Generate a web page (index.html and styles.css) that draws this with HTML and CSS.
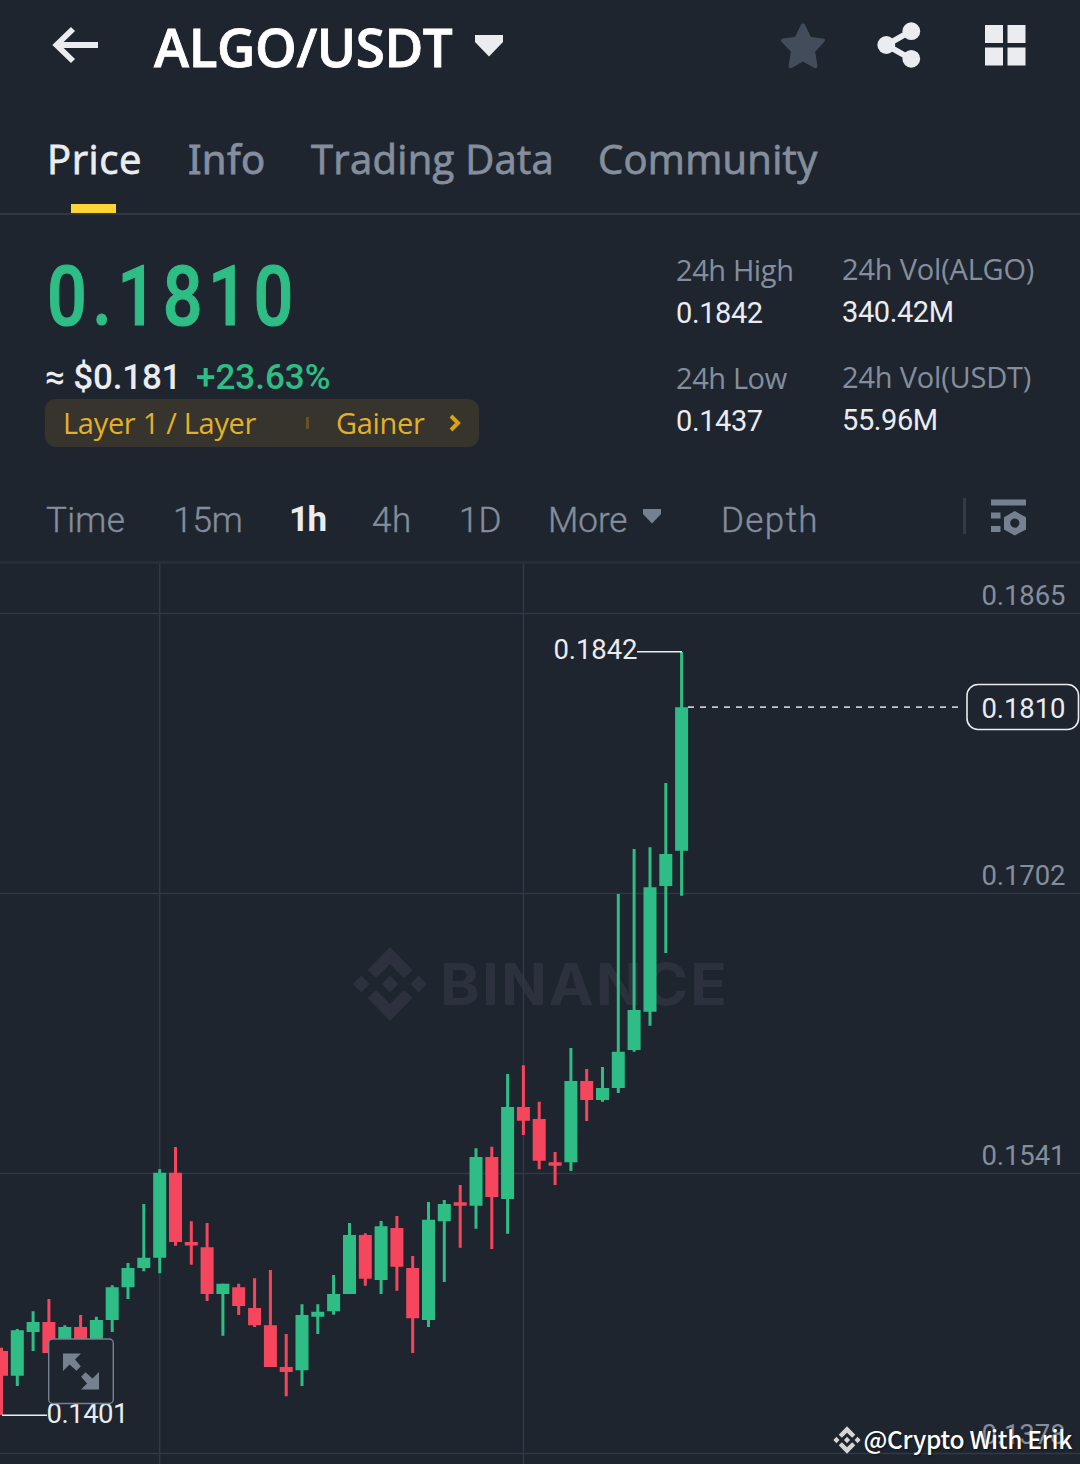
FILE: index.html
```html
<!DOCTYPE html>
<html lang="en">
<head>
<meta charset="utf-8">
<title>ALGO/USDT</title>
<link rel="stylesheet" href="styles.css">
</head>
<body>
<main class="screen">
  <header class="topbar">
    <svg class="back" width="46" height="38" viewBox="52 26 46 38"><path d="M73 29 56.500 45 73 61M57 45H98" fill="none" stroke="#eaecef" stroke-width="5.800"/></svg>
    <h1 class="pair">ALGO/USDT</h1>
    <svg class="caret" width="28" height="22" viewBox="0 0 28 22"><path d="M0 0H28V7L14 21.500 0 7Z" fill="#eaecef"/></svg>
    <div class="actions">
      <svg width="46" height="48" viewBox="780 22 46 48"><path d="M803 25.500 809.500 38.700 823 40.500 813 51.200 815.500 66.300 803 59.300 790.500 66.300 793 51.200 783 40.500 796.500 38.700Z" fill="#434c5a" stroke="#434c5a" stroke-width="4" stroke-linejoin="round"/></svg>
      <svg width="44" height="48" viewBox="877 22 44 48"><path d="M911 31 886.500 45 911 59" fill="none" stroke="#eaecef" stroke-width="6"/><g fill="#eaecef"><circle cx="911.300" cy="31.200" r="8.900"/><circle cx="886.300" cy="45" r="8.900"/><circle cx="911.300" cy="58.800" r="8.900"/></g></svg>
      <svg width="41" height="41" viewBox="0 0 41 41"><path d="M0 0H18V18H0ZM22.500 0H40.500V18H22.500ZM0 22.500H18V40.500H0ZM22.500 22.500H40.500V40.500H22.500Z" fill="#eaecef"/></svg>
    </div>
  </header>

  <nav class="tabs">
    <a class="tab tab-price active">Price</a>
    <a class="tab tab-info">Info</a>
    <a class="tab tab-data">Trading Data</a>
    <a class="tab tab-community">Community</a>
  </nav>

  <section class="summary">
    <div class="quote">
      <div class="last">0.1810</div>
      <div class="fiat"><span class="approx">≈ $0.181</span><span class="change">+23.63%</span></div>
      <div class="tags">
        <span class="tag-layer">Layer 1 / Layer</span><i class="tag-sep"></i><span class="tag-gainer">Gainer</span>
        <svg width="12" height="18" viewBox="0 0 12 18"><path d="M2 2 9 9 2 16" fill="none" stroke="#d9a412" stroke-width="4"/></svg>
      </div>
    </div>
    <dl class="stats stats-range">
      <dt>24h High</dt><dd>0.1842</dd>
      <dt>24h Low</dt><dd>0.1437</dd>
    </dl>
    <dl class="stats stats-volume">
      <dt>24h Vol(ALGO)</dt><dd>340.42M</dd>
      <dt>24h Vol(USDT)</dt><dd>55.96M</dd>
    </dl>
  </section>

  <nav class="intervals">
    <a class="iv iv-time">Time</a>
    <a class="iv iv-15m">15m</a>
    <a class="iv iv-1h active">1h</a>
    <a class="iv iv-4h">4h</a>
    <a class="iv iv-1d">1D</a>
    <a class="iv iv-more">More</a>
    <svg class="more-caret" width="18" height="15" viewBox="0 0 18 15"><path d="M0 0H18V5L9 14.500 0 5Z" fill="#758091"/></svg>
    <a class="iv iv-depth">Depth</a>
    <i class="iv-sep"></i>
    <svg class="settings" width="36" height="37" viewBox="990 499 36 37"><path d="M991 499.500H1026V505.500H991ZM991 512.500H1000.500V518.500H991ZM991 526H1000.500V532H991Z" fill="#758091"/><path fill-rule="evenodd" d="M1014.800 511 1026 517.200V529.500L1014.800 535.500 1004 529.500V517.200ZM1014.800 518.500A4.600 4.600 0 1 0 1014.800 527.700A4.600 4.600 0 1 0 1014.800 518.500Z" fill="#758091"/></svg>
  </nav>

  <section class="chart">
    <svg class="plot" width="1080" height="900" viewBox="0 564 1080 900">
      <defs>
        <g id="mark"><path d="M-22.500-13.500 0-36.500 22.500-13.500 14-5.500 0-19.500-14-5.500ZM-22.500 14.500 0 37.500 22.500 14.500 14 6.500 0 20.500-14 6.500ZM-37 .5-28.700-8-20.400.5-28.700 9ZM37 .5 28.700-8 20.400.5 28.700 9ZM0-8 8.300.5 0 9-8.300.5Z"/></g>
      </defs>
      <g fill="#2d313d">
        <use href="#mark" x="390" y="983.500"/>
        <text class="brand" x="440" y="1004.500" textLength="289" lengthAdjust="spacingAndGlyphs">BINANCE</text>
      </g>
      <path d="M0 613.500H1080M0 893.500H1080M0 1173.500H1080M0 1453.500H1080M159.700 564V1464M523.500 564V1464" stroke="#323945" stroke-width="1.500"/>
      <path class="up wick" d="M17.300 1329V1386M33.100 1311.300V1351M64.800 1325.300V1345M96.400 1316.700V1345M112.200 1285.300V1332M128 1263V1299M143.800 1204V1271.300M159.700 1169.300V1273.300M222.900 1283.700V1335.700M302 1304.300V1386M317.800 1304.300V1334M333.600 1275V1314.700M349.500 1223V1294M381.100 1221V1294M428.500 1202V1327M444.300 1200V1282M476 1148.300V1228.700M507.600 1074V1233.700M570.900 1048V1171M602.500 1067V1101.700M618.300 894V1093M634.100 849V1051.700M650 847.200V1025.700M665.800 782.900V952.900M681.600 652V895.700"/>
      <path class="up body" d="M17.300 1330.300V1375.700M33.100 1322V1332M64.800 1327V1345M96.400 1320V1345M112.200 1287.300V1320M128 1268V1287.300M143.800 1257.700V1268M159.700 1172.700V1257.700M222.900 1283.700V1294M302 1315V1370.300M317.800 1311.700V1316.700M333.600 1294V1311.300M349.500 1235V1294M381.100 1226.300V1280M428.500 1219.700V1320M444.300 1204V1221.300M476 1157V1205.700M507.600 1107V1199M570.900 1081V1162.300M602.500 1088V1100M618.300 1051.700V1088M634.100 1010V1050M650 887.200V1011.800M665.800 854V886M681.600 707.200V850.800"/>
      <path class="down wick" d="M1.500 1347.700V1415M48.900 1299V1353M80.600 1315V1345M175.500 1147V1245.700M191.300 1221.300V1264.700M207.100 1223V1301M238.700 1283.700V1315M254.600 1278.300V1327M270.400 1270V1367M286.200 1334V1396.300M365.300 1233.300V1285.700M396.900 1216V1290.700M412.700 1256V1353M460.200 1185V1247.700M491.800 1146.700V1249M523.400 1065.300V1135M539.200 1101.700V1169.300M555.100 1152V1185M586.700 1069V1121"/>
      <path class="down body" d="M1.500 1351V1375.700M48.900 1322V1353M80.600 1327V1345M175.500 1172.700V1242M191.300 1242V1245.500M207.100 1247.300V1294M238.700 1287.300V1306M254.600 1308V1325.300M270.400 1325.300V1367M286.200 1367V1372M365.300 1235V1278.700M396.900 1228V1266.700M412.700 1268V1318.300M460.200 1202.300V1205.700M491.800 1157V1197M523.400 1107V1120.700M539.200 1119V1160.700M555.100 1162.300V1165.700M586.700 1081V1100"/>
      <path d="M637 651.700H682M2 1415.300H47" stroke="#eaecef" stroke-width="1.600"/>
      <path d="M688 707.200H960" stroke="#c5c9d0" stroke-width="1.800" stroke-dasharray="6 6"/>
      <rect x="967" y="684.500" width="111.500" height="45" rx="11" fill="#1f252f" stroke="#eaecef" stroke-width="1.600"/>
      <g class="axis">
        <text x="981.500" y="604.700" textLength="84">0.1865</text>
        <text x="981.500" y="884.700" textLength="84">0.1702</text>
        <text x="981.500" y="1164.700" textLength="84">0.1541</text>
        <text x="981.500" y="1444.200" textLength="84">0.1378</text>
      </g>
      <g class="axis axis-light">
        <text x="553.500" y="659" textLength="84">0.1842</text>
        <text x="981.500" y="717.700" textLength="84">0.1810</text>
        <text x="46.500" y="1422.700" textLength="82">0.1401</text>
      </g>
      <rect x="48.700" y="1339" width="64.600" height="64.500" rx="4" fill="#1f252f" stroke="#758091" stroke-width="1.400"/>
      <path d="M63 1353.500H81L75 1359.500 80.800 1366.200 76.500 1370.800 69.500 1364.500 63 1371ZM99 1389.500H81L87 1383.500 81.200 1376.800 85.500 1372.200 92.500 1378.500 99 1372Z" fill="#758091"/>
    </svg>
    <div class="author">
      <svg width="28" height="28" viewBox="-38 -37.500 76 76"><use href="#mark" fill="#d5d5d5"/></svg>
      <span>@Crypto With Erik</span>
    </div>
  </section>
</main>
</body>
</html>
```
FILE: styles.css
```css
* { box-sizing: border-box; }
body { margin: 0; background: #1f252f; color: #eaecef; }
svg { display: block; flex: none; }
.screen { width: 1080px; height: 1464px; overflow: hidden; font-family: "Open Sans", sans-serif; }
.screen a, .screen span, .screen dt, .screen dd, .pair, .last { white-space: nowrap; }

.topbar { display: flex; height: 120px; padding: 0 54px 0 52px; align-items: flex-start; }
.back { margin-top: 26px; }
.pair { width: 300px; margin: 12px 0 0 56px; font-size: 53px; line-height: 70px; font-weight: 600; color: #fff; letter-spacing: -.4px; -webkit-text-stroke: .8px #fff; }
.caret { margin: 35px 0 0 21px; }
.actions { display: flex; align-items: flex-start; margin-left: auto; padding-top: 22px; }
.actions svg + svg { margin-left: 51px; }
.actions svg:last-child { margin: 3px 0 0 64px; }

.tabs { display: flex; height: 95px; padding-left: 47px; border-bottom: 2px solid #303742; color: #848e9c; font-size: 40px; line-height: 78px; letter-spacing: .3px; -webkit-text-stroke: .8px currentColor; }
.tab-price { width: 141px; letter-spacing: .6px; }
.tab-info { width: 123px; font-family: "Noto Sans", sans-serif; }
.tab-data { width: 287px; }
.tab.active { color: #eaecef; }
.tab.active::after { content: ""; display: block; width: 45px; height: 9px; margin: 6px 0 0 24px; background: #fcd535; }

.summary { display: flex; height: 262px; }
.quote { flex: none; width: 676px; padding: 29px 0 0 45px; }
.last { width: 262px; height: 104px; margin-left: 2px; font: 500 83px/106px Roboto, sans-serif; letter-spacing: 6.500px; color: #2ebd85; -webkit-text-stroke: 1.200px #2ebd85; transform: scaleX(.845); transform-origin: 0 50%; }
.fiat { display: flex; height: 51px; font: 500 35px/59px Roboto, sans-serif; }
.approx { width: 151px; letter-spacing: -.2px; }
.change { color: #2ebd85; }
.tags { display: flex; align-items: center; width: 434px; height: 48px; padding-left: 18px; border-radius: 11px; background: #36342c; color: #e2b02a; font-size: 29px; line-height: 48px; letter-spacing: -.3px; }
.tag-layer { width: 243px; }
.tag-sep { width: 3px; height: 12px; background: #635428; }
.tag-gainer { width: 113px; margin-left: 27px; }
.stats { flex: none; margin: 0; width: 166px; padding-top: 34px; font-size: 29px; line-height: 42px; }
.stats-volume { padding-top: 33px; width: 230px; }
.stats dt { color: #848e9c; letter-spacing: -.4px; }
.stats-volume dt { letter-spacing: -.2px; }
.stats dd { margin: 0 0 24px; font-family: Roboto, sans-serif; letter-spacing: -.4px; position: relative; top: 1px; }

.intervals { display: flex; height: 87px; padding-left: 46px; border-bottom: 3px solid #272e39; color: #848e9c; font: 300 35px/88px Roboto, sans-serif; -webkit-text-stroke: .4px currentColor; }
.iv-time { width: 127px; letter-spacing: .3px; }
.iv-15m { width: 116px; }
.iv-1h { width: 83px; }
.iv.active { color: #eaecef; font-weight: 700; line-height: 86px; letter-spacing: -1.500px; -webkit-text-stroke: 0; }
.iv-4h { width: 87px; letter-spacing: .6px; }
.iv-1d { width: 89px; }
.iv-more { width: 95px; }
.more-caret { margin-top: 32px; }
.iv-depth { width: 242px; margin-left: 60px; letter-spacing: 1.400px; }
.iv-sep { width: 3px; height: 36px; margin-top: 21px; background: #343b47; }
.settings { margin: 22px 0 0 24px; }

.chart { position: relative; height: 900px; }
.brand { font: 700 57.500px Inter, sans-serif; letter-spacing: 2px; }
.wick { stroke-width: 3; }
.body { stroke-width: 13; }
.up { stroke: #2ebd85; }
.down { stroke: #f6465d; }
.axis { font: 400 27.500px Roboto, sans-serif; fill: #848e9c; }
.axis-light { fill: #eaecef; }
.author { position: absolute; right: 8px; bottom: 5px; display: flex; align-items: center; gap: 3px; height: 38px; font: 500 24.500px/36px "Noto Sans CJK SC", sans-serif; letter-spacing: -.3px; color: #fff; text-shadow: 1px 1px 2px #0008; }
.author span { height: 38px; }
```
